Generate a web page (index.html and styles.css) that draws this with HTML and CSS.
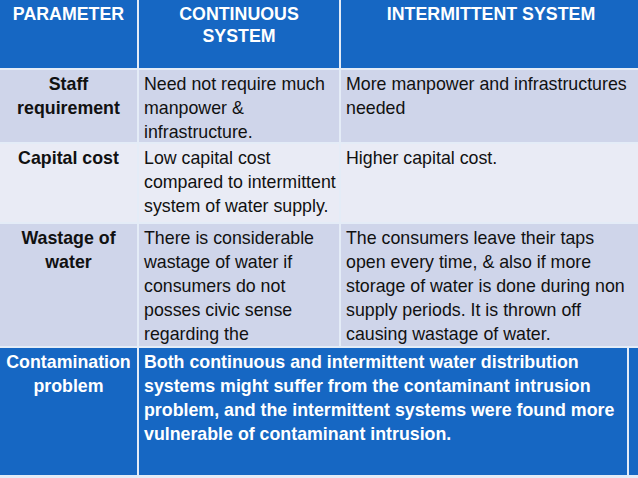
FILE: index.html
```html
<!DOCTYPE html>
<html>
<head>
<meta charset="utf-8">
<link rel="stylesheet" href="styles.css">
</head>
<body>
<div class="table">
  <div class="cell head">PARAMETER</div>
  <div class="cell head narrow">CONTINUOUS SYSTEM</div>
  <div class="cell head span2">INTERMITTENT SYSTEM</div>

  <div class="cell param odd">Staff requirement</div>
  <div class="cell mid odd">Need not require much manpower &amp; infrastructure.</div>
  <div class="cell odd span2">More manpower and infrastructures needed</div>

  <div class="cell param even">Capital cost</div>
  <div class="cell mid even">Low capital cost compared to intermittent system of water supply.</div>
  <div class="cell even span2">Higher capital cost.</div>

  <div class="cell param odd">Wastage of water</div>
  <div class="cell mid odd">There is considerable wastage of water if consumers do not posses civic sense regarding the</div>
  <div class="cell odd span2">The consumers leave their taps open every time, &amp; also if more storage of water is done during non supply periods. It is thrown off causing wastage of water.</div>

  <div class="cell param blue">Contamination problem</div>
  <div class="cell blue bold span2b">Both continuous and intermittent water distribution systems might suffer from the contaminant intrusion problem, and the intermittent systems were found more vulnerable of contaminant intrusion.</div>
  <div class="cell blue"></div>
</div>
</body>
</html>
```

FILE: styles.css
```css
html, body {
  margin: 0;
  padding: 0;
  background: #e4ecf7;
  overflow: hidden;
}

.table {
  display: grid;
  grid-template-columns: 137px 200px 286px 12px;
  grid-template-rows: 68px 72px 78px 122px 127px;
  gap: 2px;
  width: 640px;
  height: 478px;
  background: #e4ecf7;
  font-family: "Liberation Sans", Arial, sans-serif;
  font-size: 17.8px;
  line-height: 24px;
  color: #111;
}

.cell {
  padding: 2px 4px 0 5px;
  overflow: hidden;
}

.mid {
  padding-right: 0;
}

.span2 {
  grid-column: 3 / span 2;
  padding-right: 10px;
}

.span2b {
  grid-column: 2 / span 2;
}

.head {
  background: #1667c3;
  color: #fff;
  font-weight: bold;
  text-align: center;
  line-height: 22px;
  padding: 3px 2px 0;
}

.narrow {
  padding: 3px 20px 0;
}

.param {
  font-weight: bold;
  text-align: center;
  padding: 2px 1px 0;
}

.odd {
  background: #cfd5ea;
}

.even {
  background: #e9ebf5;
}

.blue {
  background: #1667c3;
  color: #fff;
}

.bold {
  font-weight: bold;
}
```
